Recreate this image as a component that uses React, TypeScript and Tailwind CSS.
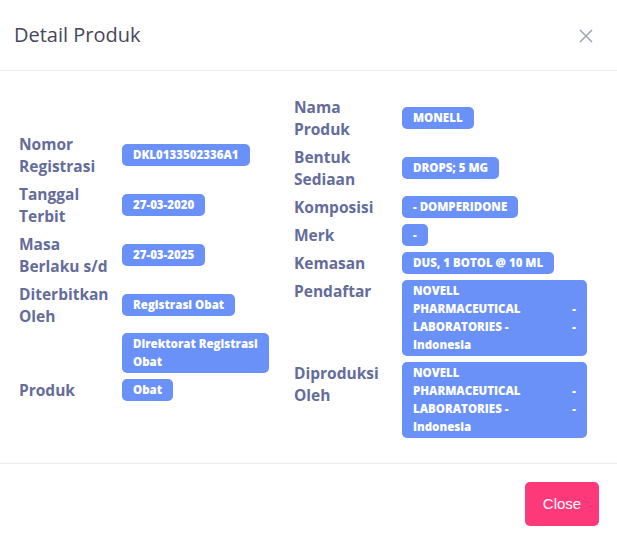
import React from 'react';

const font = { fontFamily: '"Open Sans", "Noto Sans", sans-serif' };

function Badge({ children, wide }: { children: React.ReactNode; wide?: boolean }) {
  return (
    <span
      className={
        'block bg-[#6a91f8] text-white text-[11.5px] font-extrabold leading-[18px] px-[11px] py-[2px] rounded-[5px] ' +
        (wide ? 'w-[185px]' : '')
      }
    >
      {children}
    </span>
  );
}

function Row({
  label,
  children,
  top,
  labelWidth,
}: {
  label?: React.ReactNode;
  children: React.ReactNode;
  top?: boolean;
  labelWidth: string;
}) {
  return (
    <div className={'flex py-[3px] ' + (top ? 'items-start' : 'items-center')}>
      <div className={labelWidth + ' shrink-0 text-[15.5px] leading-[22px] font-bold text-[#646c9a]'}>{label}</div>
      <div className="flex">{children}</div>
    </div>
  );
}

function Novell() {
  return (
    <Badge wide>
      <div>NOVELL</div>
      <div className="flex justify-between">
        <span>PHARMACEUTICAL</span>
        <span>-</span>
      </div>
      <div className="flex justify-between">
        <span>LABORATORIES -</span>
        <span>-</span>
      </div>
      <div>Indonesia</div>
    </Badge>
  );
}

export default function App() {
  const lw = 'w-[103px]';
  const rw = 'w-[108px]';
  return (
    <div className="w-[617px] h-[543px] bg-white flex flex-col" style={font}>
      <div className="h-[71px] shrink-0 border-b border-[#ebedf2] flex items-center justify-between pl-[14px] pr-[24px]">
        <h3 className="text-[20px] text-[#48465b] font-normal">Detail Produk</h3>
        <svg width="14" height="14" viewBox="0 0 14 14" className="mt-[2px]">
          <path d="M1 1L13 13M13 1L1 13" stroke="#a2a5b9" strokeWidth="1.6" />
        </svg>
      </div>

      <div className="flex-1 flex items-center">
        <div className="ml-[19px] w-[272px] flex flex-col">
          <Row labelWidth={lw} label={<>Nomor<br />Registrasi</>}>
            <Badge>DKL0133502336A1</Badge>
          </Row>
          <Row labelWidth={lw} label={<>Tanggal<br />Terbit</>}>
            <Badge>27-03-2020</Badge>
          </Row>
          <Row labelWidth={lw} label={<>Masa<br />Berlaku s/d</>}>
            <Badge>27-03-2025</Badge>
          </Row>
          <Row labelWidth={lw} label={<>Diterbitkan<br />Oleh</>}>
            <Badge>Registrasi Obat</Badge>
          </Row>
          <Row labelWidth={lw}>
            <Badge>
              Direktorat Registrasi
              <br />
              Obat
            </Badge>
          </Row>
          <Row labelWidth={lw} label="Produk">
            <Badge>Obat</Badge>
          </Row>
        </div>

        <div className="ml-[3px] flex flex-col">
          <Row labelWidth={rw} label={<>Nama<br />Produk</>}>
            <Badge>MONELL</Badge>
          </Row>
          <Row labelWidth={rw} label={<>Bentuk<br />Sediaan</>}>
            <Badge>DROPS; 5 MG</Badge>
          </Row>
          <Row labelWidth={rw} label="Komposisi">
            <Badge>- DOMPERIDONE</Badge>
          </Row>
          <Row labelWidth={rw} label="Merk">
            <Badge>-</Badge>
          </Row>
          <Row labelWidth={rw} label="Kemasan">
            <Badge>DUS, 1 BOTOL @ 10 ML</Badge>
          </Row>
          <Row labelWidth={rw} label="Pendaftar" top>
            <Novell />
          </Row>
          <Row labelWidth={rw} label={<>Diproduksi<br />Oleh</>} top>
            <Novell />
          </Row>
        </div>
      </div>

      <div className="h-[80px] shrink-0 border-t border-[#ebedf2] flex justify-end items-start pt-[18px] pr-[18px]">
        <button
          className="w-[74px] h-[44px] rounded-[5px] bg-[#fd397a] text-white text-[15px]"
          style={{ fontFamily: '"Liberation Sans", Arial, sans-serif' }}
        >
          Close
        </button>
      </div>
    </div>
  );
}
